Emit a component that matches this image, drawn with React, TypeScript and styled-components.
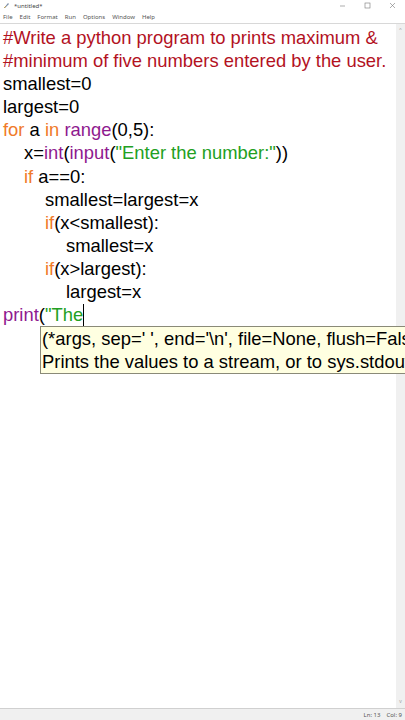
import React from "react";
import styled, { createGlobalStyle } from "styled-components";

const GlobalStyle = createGlobalStyle`
  html, body {
    margin: 0;
    padding: 0;
    background: #ffffff;
  }
  #root {
    width: 405px;
    height: 720px;
  }
`;

const Window = styled.div`
  width: 405px;
  height: 720px;
  display: flex;
  flex-direction: column;
  background: #fff;
  overflow: hidden;
  font-family: "Liberation Sans", Arial, sans-serif;
`;

const TitleBar = styled.div`
  height: 11px;
  display: flex;
  align-items: center;
  padding-left: 3px;
  font-family: "Noto Sans", sans-serif;
  font-size: 6px;
  color: #444;
`;

const TitleText = styled.span`
  margin-left: 4px;
  flex: 1;
`;

const WinButtons = styled.div`
  display: flex;
  align-items: center;
`;

const WinButton = styled.span`
  width: 25px;
  display: flex;
  justify-content: center;
  align-items: center;
`;

const MenuBar = styled.div`
  height: 12px;
  display: flex;
  align-items: center;
  gap: 7px;
  padding-left: 3px;
  font-family: "Noto Sans", sans-serif;
  font-size: 6px;
  color: #555;
  border-bottom: 1px solid #d8d8d8;
`;

const Body = styled.div`
  flex: 1;
  display: flex;
  min-height: 0;
`;

const Editor = styled.div`
  flex: 1;
  position: relative;
  font-size: 18.4px;
  line-height: 23.1px;
  color: #000;
  padding: 2px 0 0 3px;
`;

const Line = styled.div<{ $indent?: number }>`
  white-space: pre;
  padding-left: ${(p) => (p.$indent ?? 0) * 21}px;
  height: 23.1px;
`;

const Comment = styled.span`
  color: #b3121f;
`;
const Kw = styled.span`
  color: #f07a2a;
`;
const Builtin = styled.span`
  color: #8f1a8f;
`;
const Str = styled.span`
  color: #22a022;
`;

const Caret = styled.span`
  display: inline-block;
  width: 1px;
  height: 22px;
  background: #000;
  vertical-align: -5px;
`;

const CallTip = styled.div`
  position: absolute;
  top: 302px;
  left: 40px;
  width: 380px;
  padding-left: 1px;
  background: #ffffe1;
  border: 1px solid #8a8a78;
  font-size: 18.4px;
  line-height: 23px;
  white-space: pre;
  overflow: hidden;
`;

const Scrollbar = styled.div`
  width: 9px;
  background: #f0f0f0;
  display: flex;
  flex-direction: column;
  justify-content: space-between;
  align-items: center;
  padding: 3px 0 4px;
  font-size: 5px;
  color: #a0a0a0;
`;

const StatusBar = styled.div`
  height: 11px;
  border-top: 1px solid #d0d0d0;
  background: #f0f0f0;
  display: flex;
  align-items: center;
  justify-content: flex-end;
  gap: 6px;
  padding-right: 3px;
  font-family: "Noto Sans", sans-serif;
  font-size: 6px;
  color: #555;
`;

const FeatherIcon = () => (
  <svg width="7" height="7" viewBox="0 0 7 7">
    <path d="M1 6 L5 1 L6 2 L2 6 Z" fill="#7d8fa8" />
    <path d="M1 6 L3 4" stroke="#c8a040" strokeWidth="0.8" />
  </svg>
);

export default function App() {
  return (
    <>
      <GlobalStyle />
      <Window>
        <TitleBar>
          <FeatherIcon />
          <TitleText>*untitled*</TitleText>
          <WinButtons>
            <WinButton>
              <svg width="7" height="7" viewBox="0 0 7 7">
                <path d="M1 4 H6" stroke="#777" strokeWidth="0.6" />
              </svg>
            </WinButton>
            <WinButton>
              <svg width="7" height="7" viewBox="0 0 7 7">
                <rect x="1" y="1" width="5" height="5" fill="none" stroke="#777" strokeWidth="0.6" />
              </svg>
            </WinButton>
            <WinButton>
              <svg width="7" height="7" viewBox="0 0 7 7">
                <path d="M1 1 L6 6 M6 1 L1 6" stroke="#777" strokeWidth="0.6" />
              </svg>
            </WinButton>
          </WinButtons>
        </TitleBar>
        <MenuBar>
          <span>File</span>
          <span>Edit</span>
          <span>Format</span>
          <span>Run</span>
          <span>Options</span>
          <span>Window</span>
          <span>Help</span>
        </MenuBar>
        <Body>
          <Editor>
            <Line>
              <Comment>#Write a python program to prints maximum &amp;</Comment>
            </Line>
            <Line>
              <Comment>#minimum of five numbers entered by the user.</Comment>
            </Line>
            <Line>smallest=0</Line>
            <Line>largest=0</Line>
            <Line>
              <Kw>for</Kw> a <Kw>in</Kw> <Builtin>range</Builtin>(0,5):
            </Line>
            <Line $indent={1}>
              x=<Builtin>int</Builtin>(<Builtin>input</Builtin>(
              <Str>"Enter the number:"</Str>))
            </Line>
            <Line $indent={1}>
              <Kw>if</Kw> a==0:
            </Line>
            <Line $indent={2}>smallest=largest=x</Line>
            <Line $indent={2}>
              <Kw>if</Kw>(x&lt;smallest):
            </Line>
            <Line $indent={3}>smallest=x</Line>
            <Line $indent={2}>
              <Kw>if</Kw>(x&gt;largest):
            </Line>
            <Line $indent={3}>largest=x</Line>
            <Line>
              <Builtin>print</Builtin>(<Str>"The</Str>
              <Caret />
            </Line>
            <CallTip>
              <div>(*args, sep=' ', end='\n', file=None, flush=False)</div>
              <div>Prints the values to a stream, or to sys.stdout by default.</div>
            </CallTip>
          </Editor>
          <Scrollbar>
            <span>^</span>
            <span>v</span>
          </Scrollbar>
        </Body>
        <StatusBar>
          <span>Ln: 13</span>
          <span>Col: 9</span>
        </StatusBar>
      </Window>
    </>
  );
}
